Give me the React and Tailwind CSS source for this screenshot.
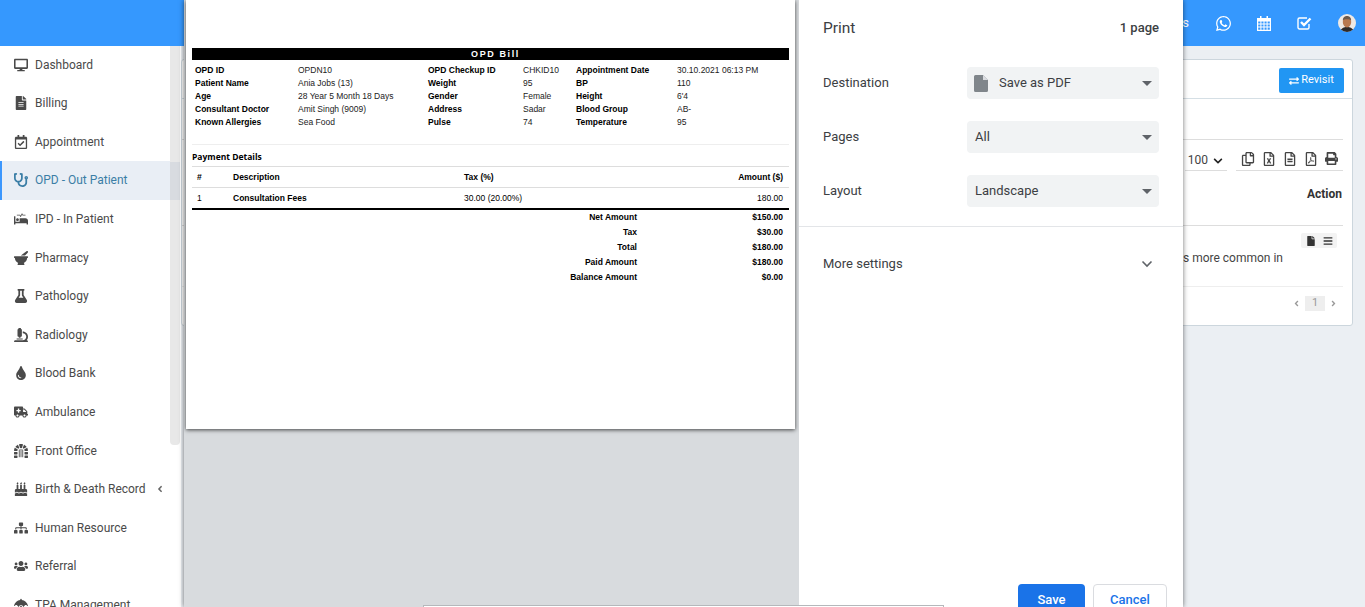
import React from "react";
import {
  FaDesktop,
  FaFileAlt,
  FaRegCalendarCheck,
  FaStethoscope,
  FaProcedures,
  FaMortarPestle,
  FaFlask,
  FaMicroscope,
  FaTint,
  FaAmbulance,
  FaDungeon,
  FaBirthdayCake,
  FaSitemap,
  FaUsers,
  FaUmbrella,
  FaWhatsapp,
  FaExchangeAlt,
  FaRegCopy,
  FaRegFileExcel,
  FaRegFileAlt,
  FaRegFilePdf,
  FaPrint,
  FaFile,
  FaBars,
  FaAngleLeft,
  FaAngleRight,
  FaChevronDown,
} from "react-icons/fa";

const menu = [
  { label: "Dashboard", icon: FaDesktop },
  { label: "Billing", icon: FaFileAlt },
  { label: "Appointment", icon: FaRegCalendarCheck },
  { label: "OPD - Out Patient", icon: FaStethoscope, active: true },
  { label: "IPD - In Patient", icon: FaProcedures },
  { label: "Pharmacy", icon: FaMortarPestle },
  { label: "Pathology", icon: FaFlask },
  { label: "Radiology", icon: FaMicroscope },
  { label: "Blood Bank", icon: FaTint },
  { label: "Ambulance", icon: FaAmbulance },
  { label: "Front Office", icon: FaDungeon },
  { label: "Birth & Death Record", icon: FaBirthdayCake, arrow: true },
  { label: "Human Resource", icon: FaSitemap },
  { label: "Referral", icon: FaUsers },
  { label: "TPA Management", icon: FaUmbrella },
];

const info = [
  ["OPD ID", "OPDN10", "OPD Checkup ID", "CHKID10", "Appointment Date", "30.10.2021 06:13 PM"],
  ["Patient Name", "Ania Jobs (13)", "Weight", "95", "BP", "110"],
  ["Age", "28 Year 5 Month 18 Days", "Gender", "Female", "Height", "6'4"],
  ["Consultant Doctor", "Amit Singh (9009)", "Address", "Sadar", "Blood Group", "AB-"],
  ["Known Allergies", "Sea Food", "Pulse", "74", "Temperature", "95"],
];

const totals = [
  ["Net Amount", "$150.00"],
  ["Tax", "$30.00"],
  ["Total", "$180.00"],
  ["Paid Amount", "$180.00"],
  ["Balance Amount", "$0.00"],
];

const Sidebar = () => (
  <aside className="relative w-[181px] shrink-0 bg-white overflow-hidden">
    <div className="w-[170px] -mt-[0.6px]">
      {menu.map((item) => {
        const Icon = item.icon;
        return (
          <div
            key={item.label}
            className={
              item.active
                ? "flex items-center h-[38.6px] border-l-2 border-[#3c97fd] bg-[#e9eef5] text-[#3b7ea6] pl-[12px]"
                : "flex items-center h-[38.6px] text-[#4a4a4a] pl-[14px]"
            }
          >
            <span className="w-[21px] flex justify-start shrink-0">
              <Icon className="text-[14px]" />
            </span>
            <span className="text-[12px] whitespace-nowrap">{item.label}</span>
            {item.arrow && <FaAngleLeft className="text-[10px] ml-[9px] text-[#666]" />}
          </div>
        );
      })}
    </div>
    <div className="absolute left-[170px] top-0 w-[10px] h-[399px] bg-[#e8e8e8] rounded-b-[4px]">
      <div className="mt-[116px] h-[38px] bg-[#d8dbe0]" />
    </div>
  </aside>
);

const Card = () => (
  <main className="flex-1 min-w-0 bg-[#ebeff3] pt-[13px] pr-[12px]">
    <div className="h-[267px] bg-white border border-[#ccd6dd] rounded-[3px]">
      <div className="h-[39px] flex items-start pt-[8px] justify-end pr-[8px] border-b border-[#d5dfe5]">
        <button className="h-[25px] w-[65px] flex items-center justify-center gap-[2px] bg-[#2196f3] text-white text-[11px] rounded-[2px]">
          <FaExchangeAlt className="text-[10px]" />
          Revisit
        </button>
      </div>
      <div className="h-[41px] mr-[9px] border-b border-[#ddd]" />
      <div className="flex justify-end h-[31px] mr-[9px] text-[#444]">
        <div className="flex items-end gap-[5px] w-[42px] h-[31px] border-b border-[#ddd] mr-[9px] text-[12px] pb-[1px] pr-[4px] justify-end">
          100
          <FaChevronDown className="text-[10px] text-[#222] mb-[3px]" />
        </div>
        <div className="flex items-end gap-[7px] h-[31px] pb-[4px] border-b border-[#ddd] pl-[5px] pr-[5px] text-[14px]">
          <FaRegCopy />
          <FaRegFileExcel />
          <FaRegFileAlt />
          <FaRegFilePdf />
          <FaPrint className="text-[13px] text-[#444] mb-[1px]" />
        </div>
      </div>
      <div className="h-[55px] mr-[9px] pr-[1px] pt-[14px] border-b border-[#ddd] text-right text-[12px] font-bold text-[#333]">
        Action
      </div>
      <div className="h-[61px] mr-[9px] border-b border-[#eee]">
        <div className="flex justify-end pt-[7px] pr-[6px]">
          <div className="flex items-center justify-center gap-[7px] w-[36px] h-[15px] bg-[#f3f3f3] rounded-[2px] text-[#333] text-[10px]">
            <FaFile />
            <FaBars />
          </div>
        </div>
        <p className="text-right pr-[60px] text-[12px] text-[#444] mt-[1px]">s more common in</p>
      </div>
      <div className="flex items-center justify-end gap-[4px] pt-[9px] pr-[14px] text-[#999] text-[10px]">
        <FaAngleLeft className="text-[9px]" />
        <span className="w-[20px] h-[15px] bg-[#eee] flex items-center justify-center text-[11px]">1</span>
        <FaAngleRight className="text-[9px]" />
      </div>
    </div>
  </main>
);

const Bill = () => (
  <div className="h-[429px] bg-white mx-[2px] w-[609px] shadow-[0_1px_4px_rgba(0,0,0,0.7)] pt-[48px] px-[6px] font-['Liberation_Sans',sans-serif] text-[8.5px] text-black">
    <div className="h-[12px] bg-black text-white text-center pl-[10px] font-bold text-[9px] leading-[12px] tracking-[1.6px]">
      OPD Bill
    </div>
    <div className="pl-[3px] pt-[3.5px] pb-[15.5px] border-b border-[#eee]">
      {info.map((row) => (
        <div key={row[0]} className="grid grid-cols-[103px_130px_95px_53px_101px_1fr] h-[13px] items-center">
          {row.map((cell, i) => (
            <span key={i} className={i % 2 === 0 ? "font-bold whitespace-nowrap" : "whitespace-nowrap text-[#222]"}>
              {cell}
            </span>
          ))}
        </div>
      ))}
    </div>
    <div className="h-[22px] pt-[6px] border-b border-[#ddd] font-['Open_Sans',sans-serif] font-bold text-[8.5px] leading-[11px]">
      Payment Details
    </div>
    <div className="grid grid-cols-[36px_231px_1fr_1fr] h-[21px] items-center pl-[5px] pr-[6px] border-b border-[#ddd] font-bold">
      <span>#</span>
      <span>Description</span>
      <span>Tax (%)</span>
      <span className="text-right">Amount ($)</span>
    </div>
    <div className="grid grid-cols-[36px_231px_1fr_1fr] h-[22px] pt-[1px] items-center pl-[5px] pr-[6px] border-b-2 border-black">
      <span>1</span>
      <span className="font-bold">Consultation Fees</span>
      <span>30.00 (20.00%)</span>
      <span className="text-right">180.00</span>
    </div>
    <div>
      {totals.map(([label, value]) => (
        <div key={label} className="flex justify-end h-[15px] items-center font-bold pr-[6px]">
          <span className="text-right">{label}</span>
          <span className="w-[146px] text-right">{value}</span>
        </div>
      ))}
    </div>
  </div>
);

const Select = ({ children }) => (
  <div className="w-[192px] h-[32px] bg-[#f1f3f4] rounded-[4px] flex items-center justify-between pl-[8px] pr-[7px] text-[#3c4043]">
    <span className="flex items-center">{children}</span>
    <span className="w-0 h-0 border-x-[5px] border-x-transparent border-t-[5px] border-t-[#5f6368]" />
  </div>
);

const Settings = () => (
  <div className="w-[384px] ml-[1px] bg-white font-['Roboto',sans-serif] text-[13px] text-[#3c4043] flex flex-col">
    <div className="h-[56px] shrink-0 px-[24px] flex items-center justify-between">
      <span className="text-[15.5px] mt-[1px]">Print</span>
      <span className="font-medium">1 page</span>
    </div>
    <div className="shrink-0 pt-[11px] pb-[19px] px-[24px] flex flex-col gap-[22px] border-b border-[#e3e5e8]">
      <div className="flex items-center justify-between">
        <span>Destination</span>
        <Select>
          <svg width="14" height="17" viewBox="0 0 14 17" className="mr-[11px] -ml-[1px]">
            <path d="M1.5 0H9l5 5v10.5a1.5 1.5 0 0 1-1.5 1.5h-11A1.5 1.5 0 0 1 0 15.5v-14A1.5 1.5 0 0 1 1.5 0z" fill="#80868b" />
            <path d="M9 0v5h5z" fill="#dadce0" />
          </svg>
          Save as PDF
        </Select>
      </div>
      <div className="flex items-center justify-between">
        <span>Pages</span>
        <Select>All</Select>
      </div>
      <div className="flex items-center justify-between">
        <span>Layout</span>
        <Select>Landscape</Select>
      </div>
    </div>
    <div className="h-[74px] shrink-0 pl-[24px] pr-[30px] flex items-center justify-between">
      <span>More settings</span>
      <svg width="12" height="8" viewBox="0 0 12 8" fill="none" stroke="#5f6368" strokeWidth="1.6">
        <path d="M1.5 1.5 6 6l4.5-4.5" />
      </svg>
    </div>
    <div className="mt-[283px] shrink-0 flex justify-end gap-[8px] pr-[16px] font-medium">
      <button className="w-[67px] h-[32px] bg-[#1a73e8] text-white rounded-[4px]">Save</button>
      <button className="w-[74px] h-[32px] bg-white border border-[#dadce0] text-[#1a73e8] rounded-[4px]">Cancel</button>
    </div>
  </div>
);

const CalendarIcon = () => (
  <svg width="14" height="15" viewBox="0 0 14 15" className="mr-[26px]">
    <path
      fillRule="evenodd"
      fill="#fff"
      d="M3 0h1.5v2h5V0H11v2h3v13H0V2h3zM1.2 5.5v2h2.2v-2zm3.2 0v2h2.1v-2zm3.1 0v2h2.1v-2zm3.1 0v2h2.2v-2zM1.2 8.5v2h2.2v-2zm3.2 0v2h2.1v-2zm3.1 0v2h2.1v-2zm3.1 0v2h2.2v-2zM1.2 11.5v2.2h2.2v-2.2zm3.2 0v2.2h2.1v-2.2zm3.1 0v2.2h2.1v-2.2zm3.1 0v2.2h2.2v-2.2z"
    />
  </svg>
);

const CheckIcon = () => (
  <svg width="15" height="14" viewBox="0 0 15 14" fill="none" stroke="#fff" className="mr-[26px]">
    <path d="M12 8v3.5a1.5 1.5 0 0 1-1.5 1.5h-8A1.5 1.5 0 0 1 1 11.5v-8A1.5 1.5 0 0 1 2.5 2H10" strokeWidth="1.4" />
    <path d="m4 6 3 3 6.5-6.5" strokeWidth="2.4" />
  </svg>
);

const Avatar = () => (
  <svg width="18" height="18" viewBox="0 0 18 18" className="rounded-full">
    <rect width="18" height="18" fill="#efe9e4" />
    <path d="M2 18c1-4 4-5 7-5s6 1 7 5z" fill="#2f2a28" />
    <ellipse cx="9" cy="8" rx="4.2" ry="5.4" fill="#b9794f" />
    <path d="M4.8 6.5C5 3 7 2 9 2s4 1 4.2 4.5C12 4.8 6 4.8 4.8 6.5z" fill="#6d5a4c" />
  </svg>
);

export default function App() {
  return (
    <div className="relative h-[607px] w-[1365px] overflow-hidden bg-[#ebeff3] font-['Roboto',sans-serif]">
      <header className="h-[46px] bg-[#3598fe] flex items-center justify-end text-white">
        <span className="text-[13px] mr-[26px]">s</span>
        <FaWhatsapp className="text-[17px] mr-[25px]" />
        <CalendarIcon />
        <CheckIcon />
        <span className="mr-[9px] flex">
          <Avatar />
        </span>
      </header>
      <div className="flex h-[561px]">
        <Sidebar />
        <Card />
      </div>

      {/* print dialog sits over the page */}
      <div className="absolute left-[184px] top-0 w-[999px] h-[607px] flex overflow-hidden bg-[#d8dbde] shadow-[0_0_5px_rgba(0,0,0,0.55)]">
        <div className="w-[614px] shrink-0">
          <Bill />
        </div>
        <Settings />
      </div>
      <div className="absolute left-[423px] top-[605px] w-[521px] h-[4px] bg-white border border-[#b5b8bb]" />
    </div>
  );
}
